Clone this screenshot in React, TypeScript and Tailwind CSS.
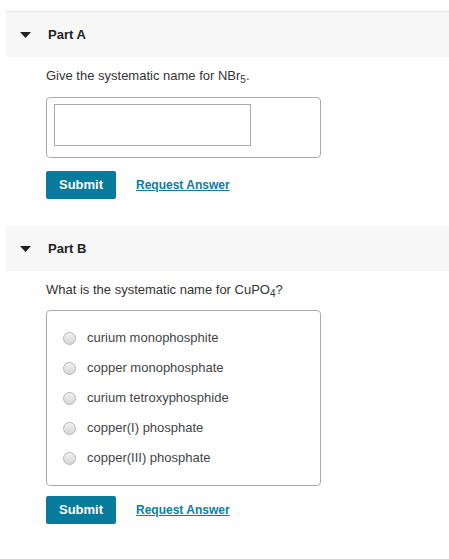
import React from 'react';

const options = [
  'curium monophosphite',
  'copper monophosphate',
  'curium tetroxyphosphide',
  'copper(I) phosphate',
  'copper(III) phosphate',
];

function PartHeader({ label }: { label: string }) {
  return (
    <div className="flex h-[45px] items-center bg-[#f7f7f7] pl-[14px]">
      <svg width="11" height="6" viewBox="0 0 11 6" className="mt-[1px]">
        <path d="M0 0 L11 0 L5.5 6 Z" fill="#222" />
      </svg>
      <span className="ml-[17px] text-[13px] font-bold text-[#222]">{label}</span>
    </div>
  );
}

function Actions() {
  return (
    <div className="flex items-center gap-[20px]">
      <button className="h-[28px] w-[70px] rounded-[2px] bg-[#077b9b] text-[13px] font-bold text-white">
        Submit
      </button>
      <a href="#" className="text-[12px] font-bold text-[#0a7ea3] underline">
        Request Answer
      </a>
    </div>
  );
}

export default function App() {
  return (
    <div
      className="min-h-[559px] bg-white pt-[11px] pl-[6px]"
      style={{ fontFamily: '"Liberation Sans", Arial, sans-serif' }}
    >
      <div className="border-t border-[#e3e3e3]">
        <PartHeader label="Part A" />
        <div className="pl-[40px]">
          <p className="mt-[11px] text-[13px] leading-[16px] text-[#333]">
            Give the systematic name for NBr<sub className="text-[10px]">5</sub>.
          </p>
          <div className="mt-[13px] h-[61px] w-[275px] rounded-[4px] border border-[#ababab] pt-[6px] pl-[7px]">
            <div className="h-[42px] w-[197px] border border-[#ababab] bg-white" />
          </div>
          <div className="mt-[13px]">
            <Actions />
          </div>
        </div>

        <div className="mt-[27px]">
          <PartHeader label="Part B" />
        </div>
        <div className="pl-[40px]">
          <p className="mt-[11px] text-[13px] leading-[16px] text-[#333]">
            What is the systematic name for CuPO<sub className="text-[10px]">4</sub>?
          </p>
          <div className="mt-[12px] flex h-[176px] w-[275px] flex-col rounded-[4px] border border-[#ababab] pt-[12px] pl-[16px]">
            {options.map((o) => (
              <label key={o} className="flex h-[30px] items-center gap-[11px]">
                <span className="h-[13px] w-[13px] rounded-full border border-[#b5b5b5] bg-gradient-to-b from-[#f2f2f2] to-[#d6d6d6]" />
                <span className="text-[13px] text-[#444]">{o}</span>
              </label>
            ))}
          </div>
          <div className="mt-[10px]">
            <Actions />
          </div>
        </div>
      </div>
    </div>
  );
}
